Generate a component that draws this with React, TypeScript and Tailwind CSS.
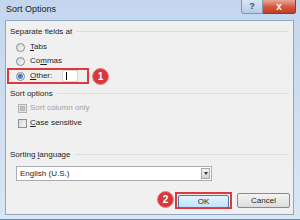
import React from 'react';

const font = { fontFamily: '"Liberation Sans", Arial, sans-serif' };

function GroupHeader({ children, className = '' }: { children: React.ReactNode; className?: string }) {
  return (
    <div className={`flex items-center h-[12px] pl-[4px] pr-[4px] ${className}`}>
      <span className="text-[8px] leading-none text-[#1e1e1e] whitespace-nowrap">{children}</span>
      <div className="flex-1 ml-[4px] h-[2px] border-t border-[#d5dfe5] border-b-white" />
    </div>
  );
}

function Radio({ checked, label, className = '' }: { checked?: boolean; label: React.ReactNode; className?: string }) {
  return (
    <div className={`flex items-center h-[14px] pl-[10px] ${className}`}>
      <div className="w-[9px] h-[9px] rounded-full border border-[#8a8b8c] bg-gradient-to-br from-[#d6d6d6] to-[#fafafa] flex items-center justify-center">
        {checked && <div className="w-[5px] h-[5px] rounded-full bg-gradient-to-br from-[#1e57a8] to-[#68a9e8]" />}
      </div>
      <span className="ml-[5px] text-[8px] leading-none text-[#1e1e1e]">{label}</span>
    </div>
  );
}

function Check({ disabled, label, className = '' }: { disabled?: boolean; label: React.ReactNode; className?: string }) {
  return (
    <div className={`flex items-center h-[14px] pl-[12px] ${className}`}>
      <div
        className={`w-[9px] h-[9px] border flex items-center justify-center ${
          disabled ? 'border-[#b1b1b1] bg-[#e6e6e6]' : 'border-[#8e8f8f] bg-gradient-to-br from-[#d9d9d9] to-[#f8f8f8]'
        }`}
      >
        {disabled && <div className="w-[5px] h-[5px] bg-[#c4c4c4] border border-[#b4b4b4]" />}
      </div>
      <span className={`ml-[3px] text-[8px] leading-none ${disabled ? 'text-[#a3a3a3]' : 'text-[#1e1e1e]'}`}>{label}</span>
    </div>
  );
}

function Badge({ n, className }: { n: string; className: string }) {
  return (
    <div
      className={`absolute w-[17px] h-[17px] rounded-full bg-[#d8373d] border border-[#f08080] text-white text-[10px] font-bold flex items-center justify-center ${className}`}
    >
      {n}
    </div>
  );
}

export default function App() {
  return (
    <div
      style={font}
      className="relative w-[300px] h-[220px] overflow-hidden flex flex-col bg-gradient-to-b from-[#c4d6ee] to-[#d9e6f4] border-b border-[#6f8aa8]"
    >
      {/* Title bar */}
      <div className="flex h-[20px] shrink-0">
        <span className="pl-[6px] pt-[5px] text-[9px] leading-none text-[#1a1a1a]">Sort Options</span>
        <div className="ml-auto mr-[4px] flex h-[14px]">
          <div className="w-[22px] h-full rounded-bl-[3px] border border-t-0 border-[#7f95b0] bg-gradient-to-b from-[#d9e5f3] to-[#b7cbe4] flex items-center justify-center text-[9px] text-[#374f6e] font-bold">
            ?
          </div>
          <div className="w-[33px] h-full rounded-br-[3px] border border-t-0 border-l-0 border-[#8c3a2c] bg-gradient-to-b from-[#e9a797] via-[#d45a43] to-[#c23d24] flex items-center justify-center text-[10px] text-white font-bold">
            x
          </div>
        </div>
      </div>

      {/* Client area */}
      <div className="ml-[5px] mr-[6px] h-[195px] border border-[#90a6c2] bg-[#f0f0f0] flex flex-col">
        <GroupHeader className="mt-[5px]">Separate fields at</GroupHeader>
        <Radio className="mt-[2px]" label={<><u>T</u>abs</>} />
        <Radio label={<>Co<u>m</u>mas</>} />
        <div className="flex items-center mt-[1px] h-[14px]">
          <Radio checked label={<><u>O</u>ther:</>} />
          <div className="ml-[10px] w-[16px] h-[12px] bg-white border border-[#d4d6dc] flex items-center pl-[3px]">
            <div className="w-px h-[8px] bg-black" />
          </div>
        </div>

        <GroupHeader className="mt-[5px]">Sort options</GroupHeader>
        <Check disabled className="mt-[1px]" label="Sort column only" />
        <Check className="mt-[1px]" label={<><u>C</u>ase sensitive</>} />

        <GroupHeader className="mt-[19px]">
          Sorting <u>l</u>anguage
        </GroupHeader>
        <div className="mt-[5px] ml-[10px] w-[196px] h-[15px] bg-white border border-[#abadb3] flex items-center">
          <span className="pl-[3px] text-[8px] leading-none text-[#1e1e1e]">English (U.S.)</span>
          <div className="ml-auto mr-[1px] w-[9px] h-[11px] border border-[#a8a8a8] bg-gradient-to-b from-[#f4f4f4] to-[#d4d4d4] flex items-center justify-center">
            <div className="w-0 h-0 border-l-[2.5px] border-r-[2.5px] border-t-[3px] border-l-transparent border-r-transparent border-t-[#333]" />
          </div>
        </div>

        <div className="mt-[11px] flex h-[17px] pr-[3px]">
          <div className="ml-auto p-[1px] border-2 border-[#dc3a3f] flex">
            <div className="w-[51px] h-[13px] rounded-[2px] border border-[#3c7fb1] bg-gradient-to-b from-[#e5f3fd] to-[#bfe3fb] flex items-center justify-center text-[8px] leading-none text-[#1e1e1e]">
              OK
            </div>
          </div>
          <div className="ml-[5px] mt-[1px] w-[53px] h-[15px] rounded-[2px] border border-[#8a8a8a] bg-gradient-to-b from-[#f4f4f4] to-[#dcdcdc] flex items-center justify-center text-[8px] leading-none text-[#1e1e1e]">
            Cancel
          </div>
        </div>
      </div>

      {/* Annotations */}
      <div className="absolute left-[7px] top-[68px] w-[82px] h-[16px] border-2 border-[#dc3a3f]" />
      <Badge n="1" className="left-[92px] top-[68px]" />
      <Badge n="2" className="left-[157px] top-[191px]" />
    </div>
  );
}
